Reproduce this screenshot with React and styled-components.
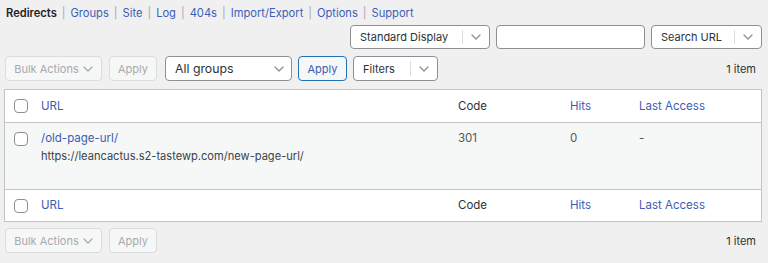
import React from 'react';
import styled, { createGlobalStyle, css } from 'styled-components';

const Global = createGlobalStyle`
  html, body {
    margin: 0;
    background: #f0f0f1;
    font-family: Inter, "Open Sans", "Liberation Sans", sans-serif;
    color: #3c434a;
    font-size: 11px;
  }
`;

const Page = styled.div`
  padding: 5px 6px 0 4px;
  width: 768px;
  box-sizing: border-box;
`;

const Nav = styled.ul`
  list-style: none;
  margin: 0;
  padding: 0 0 0 2px;
  display: flex;
  align-items: center;
  height: 16px;
  font-size: 11.15px;
  color: #8c8f94;
  li + li::before {
    content: '|';
    margin: 0 5px;
    color: #a7aaad;
  }
`;

const NavLink = styled.a`
  color: ${p => (p.$current ? '#1d2327' : '#3b5db5')};
  font-weight: ${p => (p.$current ? 600 : 400)};
  text-decoration: none;
`;

const Bar = styled.div`
  display: flex;
  align-items: center;
  gap: ${p => p.$gap ?? 7}px;
  justify-content: ${p => (p.$end ? 'flex-end' : 'flex-start')};
  margin-top: ${p => p.$top || 0}px;
  height: ${p => p.$h || 25}px;
  padding-left: 1px;
`;

const boxBase = css`
  box-sizing: border-box;
  height: 100%;
  border-radius: 4px;
  display: flex;
  align-items: center;
  font-size: 11px;
  white-space: nowrap;
  flex-shrink: 0;
`;

const Button = styled.div`
  ${boxBase};
  padding: 0 6px;
  width: ${p => p.$w}px;
  justify-content: center;
  gap: 4px;
  margin-left: ${p => p.$ml || 0}px;
  ${p =>
    p.$disabled
      ? css`
          background: #f6f7f7;
          border: 1px solid #dcdcde;
          color: #a7aaad;
        `
      : css`
          background: #f6f7f7;
          border: 1px solid #2271b1;
          color: #3b5db5;
        `}
`;

const Select = styled.div`
  ${boxBase};
  width: ${p => p.$w}px;
  background: #fff;
  border: 1px solid #8c8f94;
  color: #2c3338;
  padding-left: 9px;
  margin-left: ${p => p.$ml || 0}px;
`;

const SelectLabel = styled.span`
  flex: 1;
  font-size: ${p => (p.$big ? 12.3 : 11)}px;
`;

const Split = styled.span`
  align-self: stretch;
  display: flex;
  align-items: center;
  justify-content: center;
  width: 26px;
  border-left: 1px solid #dcdcde;
  margin: 4px 0;
`;

const Plain = styled.span`
  width: 24px;
  display: flex;
  justify-content: center;
`;

const Input = styled.div`
  ${boxBase};
  width: 149px;
  background: #fff;
  border: 1px solid #8c8f94;
`;

const Count = styled.span`
  margin-left: auto;
  padding-right: 6px;
  color: #2c3338;
  font-size: 11px;
`;

const Table = styled.div`
  margin-top: 8px;
  border: 1px solid #c3c4c7;
  background: #fff;
  width: 758px;
  box-sizing: border-box;
`;

const Row = styled.div`
  display: grid;
  grid-template-columns: 28px 417px 112px 69px 1fr;
  height: ${p => p.$h}px;
  align-items: ${p => (p.$top ? 'start' : 'center')};
  background: ${p => (p.$alt ? '#f6f7f7' : '#fff')};
  border-top: ${p => (p.$line ? '1px solid #c3c4c7' : 'none')};
  box-sizing: border-box;
  padding-top: ${p => (p.$top ? 7 : 0)}px;
`;

const Cell = styled.div`
  padding-left: 8px;
  font-size: 11.5px;
  line-height: 17px;
  color: ${p => (p.$link ? '#3b5db5' : p.$muted ? '#50575e' : '#2c3338')};
`;

const Check = styled.span`
  display: block;
  width: 14px;
  height: 14px;
  margin-left: 9px;
  margin-top: ${p => p.$mt || 0}px;
  box-sizing: border-box;
  border: 1px solid #8c8f94;
  border-radius: 4px;
  background: #fff;
`;

const Target = styled.div`
  font-size: 11.1px;
  color: #3c434a;
  margin-top: 1px;
`;

const Chevron = ({ color = '#8c8f94' }) => (
  <svg width="10" height="6" viewBox="0 0 10 6" fill="none">
    <path d="M1 1l4 4 4-4" stroke={color} strokeWidth="1.3" strokeLinecap="round" strokeLinejoin="round" />
  </svg>
);

const tabs = ['Redirects', 'Groups', 'Site', 'Log', '404s', 'Import/Export', 'Options', 'Support'];

function HeaderRow({ line }) {
  return (
    <Row $h={32} $line={line}>
      <Check />
      <Cell $link>URL</Cell>
      <Cell>Code</Cell>
      <Cell $link>Hits</Cell>
      <Cell $link>Last Access</Cell>
    </Row>
  );
}

function BulkBar({ top, children }) {
  return (
    <Bar $top={top} $h={25} $gap={0}>
      <Button $disabled $w={97}>
        Bulk Actions <Chevron color="#a7aaad" />
      </Button>
      <Button $disabled $w={48} $ml={7}>Apply</Button>
      {children}
      <Count>1 item</Count>
    </Bar>
  );
}

export default function App() {
  return (
    <Page>
      <Global />
      <Nav>
        {tabs.map((t, i) => (
          <li key={t}>
            <NavLink $current={i === 0}>{t}</NavLink>
          </li>
        ))}
      </Nav>

      <Bar $end $top={4} $h={24} $gap={6}>
        <Select $w={140}>
          <SelectLabel>Standard Display</SelectLabel>
          <Split><Chevron /></Split>
        </Select>
        <Input />
        <Select $w={111}>
          <SelectLabel>Search URL</SelectLabel>
          <Split><Chevron /></Split>
        </Select>
      </Bar>

      <BulkBar top={7}>
        <Select $w={127} $ml={8}>
          <SelectLabel $big>All groups</SelectLabel>
          <Plain><Chevron /></Plain>
        </Select>
        <Button $w={49} $ml={6}>Apply</Button>
        <Select $w={85} $ml={6}>
          <SelectLabel>Filters</SelectLabel>
          <Split><Chevron /></Split>
        </Select>
      </BulkBar>

      <Table>
        <HeaderRow />
        <Row $h={67} $alt $line $top>
          <Check $mt={2} />
          <Cell $link>
            /old-page-url/
            <Target>https://leancactus.s2-tastewp.com/new-page-url/</Target>
          </Cell>
          <Cell $muted>301</Cell>
          <Cell $muted>0</Cell>
          <Cell $muted>-</Cell>
        </Row>
        <HeaderRow line />
      </Table>

      <BulkBar top={6} />
    </Page>
  );
}
